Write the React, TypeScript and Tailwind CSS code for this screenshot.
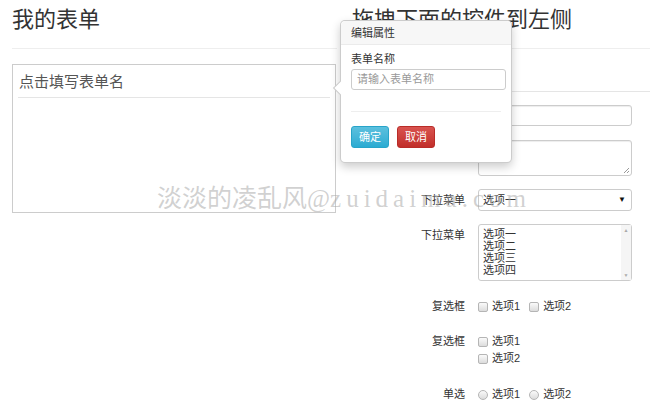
const SANS = "font-['Liberation_Sans','Noto_Sans_CJK_SC',sans-serif]";

function Checkbox() {
  return (
    <span className="inline-block w-[10px] h-[10px] rounded-[2px] border border-[#b5b5b5] bg-gradient-to-b from-[#fafafa] to-[#dcdcdc]" />
  );
}

function Radio() {
  return (
    <span className="inline-block w-[10px] h-[10px] rounded-full border border-[#b5b5b5] bg-gradient-to-b from-[#fafafa] to-[#dcdcdc]" />
  );
}

function Row({ label, children, className, labelPad }: { label: string; children: React.ReactNode; className?: string; labelPad?: boolean }) {
  return (
    <div className={`flex items-start ${className ?? ''}`}>
      <div className={`w-[113px] shrink-0 text-right text-[11px] leading-[17px] text-[#333] ${labelPad ? 'pt-[3px]' : ''}`}>{label}</div>
      <div className="ml-[13px] w-[154px]">{children}</div>
    </div>
  );
}

export default function App() {
  return (
    <div className={`relative w-[650px] h-[415px] overflow-hidden bg-white text-[#333] ${SANS}`}>
      <div className="flex">
        {/* Left: my form */}
        <div className="ml-[12px] w-[325px] shrink-0">
          <div className="h-[49px] border-b border-[#eee]">
            <h3 className="pt-[8px] text-[22px] leading-[24px] font-['Liberation_Serif','Noto_Sans_CJK_SC',serif] text-[#333]">
              我的表单
            </h3>
          </div>
          <div className="mt-[15px] h-[149px] w-[324px] border border-[#ccc] px-[5px]">
            <div className="h-[33px] border-b border-[#e5e5e5] pl-[1px] text-[15px] leading-[33px] text-[#555]">
              点击填写表单名
            </div>
          </div>
        </div>

        {/* Right: components */}
        <div className="ml-[15px] w-[325px] shrink-0">
          <div className="h-[49px] border-b border-[#eee]">
            <h3 className="pt-[8px] text-[22px] leading-[24px] font-['Liberation_Serif','Noto_Sans_CJK_SC',serif] text-[#333]">
              拖拽下面的控件到左侧
            </h3>
          </div>
          <div className="h-[43px] border-b border-[#e5e5e5]" />

          <Row label="文本框" className="mt-[13px]" labelPad>
            <div className="h-[21px] rounded-[3px] border border-[#ccc] shadow-[inset_0_1px_1px_rgba(0,0,0,0.075)]" />
          </Row>
          <Row label="多行文本" className="mt-[14px]" labelPad>
            <div className="relative h-[36px] rounded-[3px] border border-[#ccc] shadow-[inset_0_1px_1px_rgba(0,0,0,0.075)]">
              <svg className="absolute right-[1px] bottom-[1px]" width="7" height="7" viewBox="0 0 7 7">
                <path d="M6 1L1 6M6 4L4 6" stroke="#999" strokeWidth="1" />
              </svg>
            </div>
          </Row>
          <Row label="下拉菜单" className="mt-[13px]" labelPad>
            <div className="flex h-[22px] items-center justify-between rounded-[3px] border border-[#ccc] pl-[4px] pr-[5px] text-[11px] text-[#333]">
              <span>选项一</span>
              <span className="text-[8px] text-[#111]">▼</span>
            </div>
          </Row>
          <Row label="下拉菜单" className="mt-[13px]" labelPad>
            <div className="flex h-[57px] rounded-[3px] border border-[#ccc]">
              <div className="flex-1 pl-[4px] pt-[3px] text-[11px] leading-[12px] text-[#333]">
                <div>选项一</div>
                <div>选项二</div>
                <div>选项三</div>
                <div>选项四</div>
              </div>
              <div className="flex w-[10px] flex-col items-center justify-between bg-[#f5f5f5] py-[2px] text-[5px] leading-[6px] text-[#aaa]">
                <span>▲</span>
                <span>▼</span>
              </div>
            </div>
          </Row>

          <Row label="复选框" className="mt-[17px]">
            <div className="flex items-center text-[11px] leading-[17px]">
              <Checkbox />
              <span className="ml-[4px]">选项1</span>
              <span className="ml-[9px] flex"><Checkbox /></span>
              <span className="ml-[4px]">选项2</span>
            </div>
          </Row>
          <Row label="复选框" className="mt-[18px]">
            <div className="text-[11px] leading-[17px]">
              <div className="flex items-center"><Checkbox /><span className="ml-[4px]">选项1</span></div>
              <div className="flex items-center"><Checkbox /><span className="ml-[4px]">选项2</span></div>
            </div>
          </Row>
          <Row label="单选" className="mt-[19px]">
            <div className="flex items-center text-[11px] leading-[17px]">
              <Radio />
              <span className="ml-[4px]">选项1</span>
              <span className="ml-[9px] flex"><Radio /></span>
              <span className="ml-[4px]">选项2</span>
            </div>
          </Row>
        </div>
      </div>

      {/* Edit popover */}
      <div className="absolute left-[340px] top-[20px] w-[172px] rounded-[5px] border border-[rgba(0,0,0,0.2)] bg-white shadow-[0_4px_10px_rgba(0,0,0,0.2)]">
        <div className="absolute left-[-6px] top-[62px] h-[10px] w-[10px] rotate-45 border-b border-l border-[rgba(0,0,0,0.2)] bg-white" />
        <div className="h-[24px] rounded-t-[5px] border-b border-[#ebebeb] bg-[#f7f7f7] px-[10px] text-[11px] leading-[24px] text-[#333]">
          编辑属性
        </div>
        <div className="px-[10px] pt-[6px] pb-[14px]">
          <div className="text-[11px] leading-[17px] text-[#333]">表单名称</div>
          <div className="mt-[1px] h-[21px] w-[155px] rounded-[3px] border border-[#ccc] px-[5px] text-[11px] leading-[19px] text-[#999]">
            请输入表单名称
          </div>
          <div className="mt-[21px] h-px w-[150px] bg-[#eee]" />
          <div className="mt-[14px] flex gap-[8px]">
            <button className="h-[22px] w-[38px] rounded-[3px] border border-[#28a4c9] bg-gradient-to-b from-[#5bc0de] to-[#2aabd2] text-[11px] text-white">
              确定
            </button>
            <button className="h-[22px] w-[38px] rounded-[3px] border border-[#b92c28] bg-gradient-to-b from-[#d9534f] to-[#c12e2a] text-[11px] text-white">
              取消
            </button>
          </div>
        </div>
      </div>

      {/* Watermark */}
      <div className="pointer-events-none absolute left-[157px] top-[184px] whitespace-nowrap font-['Liberation_Serif','Noto_Sans_CJK_SC',serif] text-[25px] leading-[30px] text-[rgba(170,170,170,0.55)]">
        淡淡的凌乱风@<span className="tracking-[5px]">zuidaima.com</span>
      </div>
    </div>
  );
}
